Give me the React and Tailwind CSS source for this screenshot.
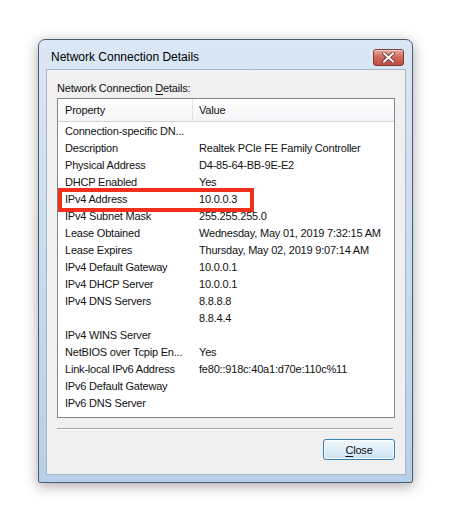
import React from "react";

const rows = [
  ["Connection-specific DN...", ""],
  ["Description", "Realtek PCIe FE Family Controller"],
  ["Physical Address", "D4-85-64-BB-9E-E2"],
  ["DHCP Enabled", "Yes"],
  ["IPv4 Address", "10.0.0.3"],
  ["IPv4 Subnet Mask", "255.255.255.0"],
  ["Lease Obtained", "Wednesday, May 01, 2019 7:32:15 AM"],
  ["Lease Expires", "Thursday, May 02, 2019 9:07:14 AM"],
  ["IPv4 Default Gateway", "10.0.0.1"],
  ["IPv4 DHCP Server", "10.0.0.1"],
  ["IPv4 DNS Servers", "8.8.8.8"],
  ["", "8.8.4.4"],
  ["IPv4 WINS Server", ""],
  ["NetBIOS over Tcpip En...", "Yes"],
  ["Link-local IPv6 Address", "fe80::918c:40a1:d70e:110c%11"],
  ["IPv6 Default Gateway", ""],
  ["IPv6 DNS Server", ""],
];

export default function App() {
  return (
    <div
      className="w-[451px] h-[524px] bg-white pt-[39px] pl-[38px]"
      style={{ fontFamily: '"Liberation Sans", Arial, sans-serif' }}
    >
      <div className="w-[375px] h-[444px] rounded-t-[7px] rounded-b-[2px] border border-[#4d5d70] bg-gradient-to-b from-[#dbe7f4] via-[#c9dbee] to-[#b8cfe8] shadow-[0_3px_14px_rgba(0,0,0,0.35)] flex flex-col">
        {/* title bar */}
        <div className="h-[29px] flex items-start justify-between">
          <div className="pl-[12px] pt-[9px] text-[12px] leading-[16px] text-black">
            Network Connection Details
          </div>
          <div className="mt-[9px] mr-[8px] w-[31px] h-[17px] rounded-[3px] border border-[#7a3a35] bg-gradient-to-b from-[#e9a99c] via-[#d0685d] to-[#c24a3f] flex items-center justify-center shadow-[inset_0_1px_0_rgba(255,255,255,0.5)]">
            <svg width="13" height="11" viewBox="0 0 13 11">
              <path d="M2 1.5 L11 9.5 M11 1.5 L2 9.5" stroke="#5a2a28" strokeWidth="3.6" strokeLinecap="square" />
              <path d="M2 1.5 L11 9.5 M11 1.5 L2 9.5" stroke="#ffffff" strokeWidth="2" strokeLinecap="square" />
            </svg>
          </div>
        </div>
        {/* content panel */}
        <div className="ml-[7px] mr-[6px] h-[406px] bg-[#f0f0f0] border border-[#a6b8cc] flex flex-col text-[11px] tracking-[-0.2px] text-[#111]">
          <div className="pl-[10px] pt-[10px] leading-[16px]">
            Network Connection <span className="underline underline-offset-2">D</span>etails:
          </div>
          <div className="relative ml-[10px] mt-[2px] w-[338px] h-[320px] border border-[#828790] bg-white flex flex-col">
            <div className="h-[23px] flex border-b border-[#d5d5d5] bg-gradient-to-b from-white to-[#f4f5f7]">
              <div className="w-[135px] border-r border-[#e3e4e6] pl-[7px] flex items-center leading-[16px]">
                Property
              </div>
              <div className="pl-[6px] flex items-center leading-[16px]">Value</div>
            </div>
            <div className="pt-[1px] flex flex-col">
              {rows.map(([k, v], i) => (
                <div key={i} className="h-[17px] flex items-center leading-[17px] whitespace-nowrap">
                  <div className="w-[135px] pl-[7px]">{k}</div>
                  <div className="pl-[6px]">{v}</div>
                </div>
              ))}
            </div>
            <div className="absolute left-0 top-[89px] w-[196px] h-[24px] border-[4px] border-[#f0301d]"></div>
          </div>
          <div className="ml-[10px] mr-[12px] mt-[10px] h-[2px] border-t border-[#a0a0a0] border-b border-b-white"></div>
          <div className="flex justify-end mr-[10px] mt-[9px]">
            <div className="w-[72px] h-[21px] rounded-[3px] border border-[#3c7fb1] bg-gradient-to-b from-[#f2f9fd] via-[#e0eef8] to-[#c9e2f3] shadow-[inset_0_0_0_1px_rgba(255,255,255,0.7)] flex items-center justify-center leading-[16px] text-[11px]">
              <span className="underline underline-offset-2">C</span>lose
            </div>
          </div>
        </div>
      </div>
    </div>
  );
}
